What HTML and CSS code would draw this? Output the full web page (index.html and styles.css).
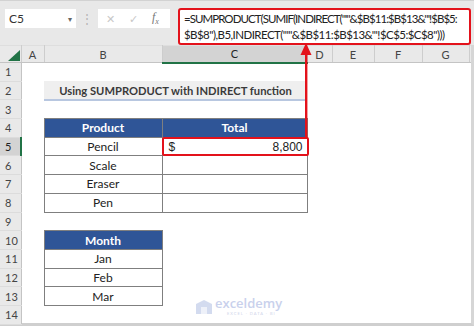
FILE: index.html
```html
<!DOCTYPE html>
<html lang="en">

<head>
    <meta charset="UTF-8">
    <meta name="viewport" content="width=device-width, initial-scale=1.0">
    <title>SUMPRODUCT with INDIRECT</title>
    <link rel="stylesheet" href="styles.css">
</head>

<body>
    <div class="app">
        <div class="bar">
            <div class="namebox">
                <span>C5</span>
                <span class="caret">&#9662;</span>
            </div>
            <div class="grip">&#8942;</div>
            <div class="fxbox">
                <span class="cancel">&#10005;</span>
                <span class="enter">&#10003;</span>
                <span class="fx">f<sub>x</sub></span>
            </div>
            <div class="formula">
                <div class="line-one">=SUMPRODUCT(SUMIF(INDIRECT("'"&amp;$B$11:$B$13&amp;"'!$B$5:</div>
                <div>$B$8"),B5,INDIRECT("'"&amp;$B$11:$B$13&amp;"'!$C$5:$C$8")))</div>
            </div>
        </div>

        <div class="grid-wrap">
            <table class="sheet">
                <colgroup>
                    <col style="width:21px">
                    <col style="width:23px">
                    <col style="width:118px">
                    <col style="width:145px">
                    <col style="width:25px">
                    <col style="width:42px">
                    <col style="width:48px">
                    <col style="width:47px">
                    <col style="width:2px">
                </colgroup>
                <tr class="colhead">
                    <th class="corner">
                        <svg width="12" height="11" viewBox="0 0 12 11"><polygon points="12,0 12,11 0,11" fill="#217346" /></svg>
                    </th>
                    <th>A</th>
                    <th>B</th>
                    <th class="active">C</th>
                    <th>D</th>
                    <th>E</th>
                    <th>F</th>
                    <th>G</th>
                    <th class="last"></th>
                </tr>
                <tr>
                    <th class="rowhead">1</th>
                    <td></td><td></td><td></td><td></td><td></td><td></td><td></td><td></td>
                </tr>
                <tr>
                    <th class="rowhead">2</th>
                    <td></td>
                    <td class="title" colspan="2">Using SUMPRODUCT with INDIRECT function</td>
                    <td></td><td></td><td></td><td></td><td></td>
                </tr>
                <tr>
                    <th class="rowhead">3</th>
                    <td></td><td></td><td></td><td></td><td></td><td></td><td></td><td></td>
                </tr>
                <tr>
                    <th class="rowhead">4</th>
                    <td></td>
                    <td class="head">Product</td>
                    <td class="head">Total</td>
                    <td></td><td></td><td></td><td></td><td></td>
                </tr>
                <tr>
                    <th class="rowhead active">5</th>
                    <td></td>
                    <td class="box">Pencil</td>
                    <td class="box sel">
                        <div class="money"><span>$</span><span>8,800</span></div>
                    </td>
                    <td></td><td></td><td></td><td></td><td></td>
                </tr>
                <tr>
                    <th class="rowhead">6</th>
                    <td></td>
                    <td class="box">Scale</td>
                    <td class="box"></td>
                    <td></td><td></td><td></td><td></td><td></td>
                </tr>
                <tr>
                    <th class="rowhead">7</th>
                    <td></td>
                    <td class="box">Eraser</td>
                    <td class="box"></td>
                    <td></td><td></td><td></td><td></td><td></td>
                </tr>
                <tr>
                    <th class="rowhead">8</th>
                    <td></td>
                    <td class="box">Pen</td>
                    <td class="box"></td>
                    <td></td><td></td><td></td><td></td><td></td>
                </tr>
                <tr>
                    <th class="rowhead">9</th>
                    <td></td><td></td><td></td><td></td><td></td><td></td><td></td><td></td>
                </tr>
                <tr>
                    <th class="rowhead">10</th>
                    <td></td>
                    <td class="head">Month</td>
                    <td></td><td></td><td></td><td></td><td></td><td></td>
                </tr>
                <tr>
                    <th class="rowhead">11</th>
                    <td></td>
                    <td class="box">Jan</td>
                    <td></td><td></td><td></td><td></td><td></td><td></td>
                </tr>
                <tr>
                    <th class="rowhead">12</th>
                    <td></td>
                    <td class="box">Feb</td>
                    <td></td><td></td><td></td><td></td><td></td><td></td>
                </tr>
                <tr>
                    <th class="rowhead">13</th>
                    <td></td>
                    <td class="box">Mar</td>
                    <td></td><td></td><td></td><td></td><td></td><td></td>
                </tr>
                <tr>
                    <th class="rowhead">14</th>
                    <td></td><td></td><td></td><td></td><td></td><td></td><td></td><td></td>
                </tr>
            </table>
        </div>

        <!-- arrow from the selected cell up to the formula -->
        <svg class="arrow" width="14" height="96" viewBox="0 0 14 96">
            <polygon points="7,0 1.5,12 12.5,12" fill="#e3121b" />
            <rect x="6" y="10" width="2.4" height="86" fill="#e3121b" />
        </svg>

        <div class="watermark">
            <svg width="16" height="14" viewBox="0 0 16 14">
                <polygon points="8,0 16,4 16,14 0,14 0,4" fill="#d3dbef" />
                <rect x="5" y="7" width="6" height="7" fill="#eef1f9" />
            </svg>
            <div class="mark-text">
                <span class="mark-name">exceldemy</span>
                <span class="mark-sub">EXCEL · DATA · BI</span>
            </div>
        </div>
    </div>
</body>

</html>
```

FILE: styles.css
```css
* {
    margin: 0;
    padding: 0;
    box-sizing: border-box;
}

body {
    background-color: #ffffff;
    font-family: Lato, "Open Sans", sans-serif;
}

.app {
    position: relative;
    width: 474px;
    height: 326px;
    overflow: hidden;
    background-color: #e8e8e8;
}

/* formula bar */

.bar {
    height: 45px;
    display: flex;
    align-items: flex-start;
    padding-top: 8px;
    padding-left: 5px;
    border-top: 1px solid #d2d2d2;
}

.namebox {
    width: 71px;
    height: 19px;
    background: #ffffff;
    display: flex;
    align-items: center;
    justify-content: space-between;
    padding: 0 4px 0 4px;
    font-size: 12px;
    color: #333;
}

.caret {
    font-size: 8px;
    color: #666;
}

.grip {
    width: 22px;
    text-align: center;
    color: #b5b5b5;
    font-size: 12px;
    line-height: 19px;
}

.fxbox {
    width: 72px;
    height: 19px;
    background: #ffffff;
    display: flex;
    align-items: center;
    padding-left: 8px;
    gap: 14px;
    font-size: 11px;
    color: #c8c8c8;
}

.fx {
    color: #777;
    font-family: "Liberation Serif", serif;
    font-style: italic;
    font-size: 12px;
}

.fx sub {
    font-size: 8px;
}

.formula {
    margin-left: 8px;
    margin-top: -1px;
    width: 293px;
    height: 37px;
    background: #ffffff;
    border: 2px solid #e3121b;
    border-radius: 3px;
    padding: 1px 0 0 4px;
    font-size: 11.5px;
    letter-spacing: -0.55px;
    line-height: 15.5px;
    color: #222;
    white-space: nowrap;
    overflow: hidden;
}

.formula .line-one {
    letter-spacing: -0.95px;
}

/* sheet */

.grid-wrap {
    background: #ffffff;
    border-right: 3px solid #d6d6d6;
    border-bottom: 3px solid #cfcfcf;
    height: 281px;
}

.sheet {
    border-collapse: collapse;
    table-layout: fixed;
    width: 471px;
    font-size: 12px;
    color: #222;
}

.sheet tr {
    height: 18.7px;
}

.sheet td {
    padding: 0;
    text-align: center;
    white-space: nowrap;
}

.colhead {
    height: 17px !important;
}

.colhead th {
    background: #e9e9e9;
    font-weight: normal;
    font-size: 11px;
    color: #444;
    border-right: 1px solid #cdcdcd;
    border-bottom: 1px solid #c4c4c4;
    border-top: 1px solid #dedede;
}

.colhead th.active {
    background: #d3d3d3;
    border-bottom: 2px solid #217346;
    color: #222;
}

.colhead th.last {
    border-right: none;
}

.corner {
    text-align: right;
    vertical-align: bottom;
    padding: 0 1px 1px 0;
}

.corner svg {
    display: block;
    margin-left: auto;
}

.rowhead {
    background: #e9e9e9;
    font-weight: normal;
    font-size: 11px;
    color: #444;
    text-align: left;
    padding-left: 5px;
    border-right: 1px solid #c4c4c4;
    border-bottom: 1px solid #dcdcdc;
}

.rowhead.active {
    background: #d3d3d3;
    border-right: 2px solid #217346;
    color: #222;
}

.title {
    background: #efefef;
    border-bottom: 2px solid #b8c7e0;
    font-weight: bold;
    font-size: 11.2px;
    color: #3a3a3a;
}

.head {
    background: #2f5597;
    color: #ffffff;
    font-weight: bold;
    border: 1px solid #7f7f7f;
}

.box {
    border: 1px solid #7f7f7f;
}

.sel {
    position: relative;
}

.sel::after {
    content: "";
    position: absolute;
    top: -1px;
    left: -1px;
    right: -2px;
    bottom: -1px;
    border: 2px solid #e3121b;
    border-radius: 2px;
}

.money {
    display: flex;
    justify-content: space-between;
    padding: 0 4px 0 6px;
    font-family: "Liberation Sans", Arial, sans-serif;
    font-size: 12px;
}

/* overlays */

.arrow {
    position: absolute;
    left: 299px;
    top: 43px;
}

.watermark {
    position: absolute;
    left: 196px;
    top: 297px;
    display: flex;
    align-items: center;
    gap: 3px;
}

.mark-text {
    display: flex;
    flex-direction: column;
    gap: 1px;
}

.mark-name {
    font-family: "Open Sans", sans-serif;
    font-size: 13px;
    line-height: 13px;
    font-weight: 600;
    color: #c9d1ec;
}

.mark-sub {
    font-size: 4px;
    line-height: 5px;
    color: #cfd5ea;
    letter-spacing: 1px;
    padding-left: 12px;
}
```
